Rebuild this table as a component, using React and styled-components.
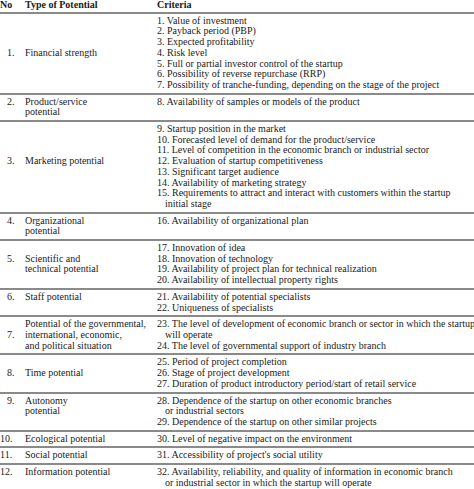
import React from 'react';
import styled, { createGlobalStyle } from 'styled-components';

const LINE = 10.7;

const GlobalStyle = createGlobalStyle`
  html, body {
    margin: 0;
    padding: 0;
    background: #ffffff;
  }
  body {
    font-family: "Liberation Serif", "Times New Roman", serif;
    color: #1a1a1a;
    overflow: hidden;
  }
`;

const Page = styled.div`
  width: 474px;
  height: 489px;
  overflow: hidden;
`;

const Table = styled.table`
  width: 480px;
  border-collapse: collapse;
  table-layout: fixed;
  font-size: 10px;
  line-height: ${LINE}px;
`;

const Row = styled.tr`
  border-bottom: 2px solid #8a8a8a;
`;

const HeadCell = styled.th`
  text-align: left;
  font-weight: bold;
  padding: 0 0 1px 0;
  vertical-align: top;
  white-space: nowrap;
`;

const NoCell = styled.td`
  vertical-align: top;
  padding: ${(p) => p.$skip * LINE + 2}px 0 2px ${(p) => (p.$wide ? 0 : 7)}px;
  white-space: nowrap;
`;

const TypeCell = styled.td`
  vertical-align: top;
  padding: ${(p) => p.$skip * LINE + 2}px 0 2px 0;
  white-space: nowrap;
`;

const CriteriaCell = styled.td`
  vertical-align: top;
  padding: 2px 0 2px 0;
  white-space: nowrap;
`;

const Line = styled.div`
  padding-left: ${(p) => (p.$cont ? 8 : 0)}px;
`;

const rows = [
  {
    no: '1.',
    type: ['Financial strength'],
    skip: 3,
    criteria: [
      '1. Value of investment',
      '2. Payback period (PBP)',
      '3. Expected profitability',
      '4. Risk level',
      '5. Full or partial investor control of the startup',
      '6. Possibility of reverse repurchase (RRP)',
      '7. Possibility of tranche-funding, depending on the stage of the project',
    ],
  },
  {
    no: '2.',
    type: ['Product/service', 'potential'],
    skip: 0,
    criteria: ['8. Availability of samples or models of the product'],
  },
  {
    no: '3.',
    type: ['Marketing potential'],
    skip: 3,
    criteria: [
      '9. Startup position in the market',
      '10. Forecasted level of demand for the product/service',
      '11. Level of competition in the economic branch or industrial sector',
      '12. Evaluation of startup competitiveness',
      '13. Significant target audience',
      '14. Availability of marketing strategy',
      '15. Requirements to attract and interact with customers within the startup',
      ['initial stage'],
    ],
  },
  {
    no: '4.',
    type: ['Organizational', 'potential'],
    skip: 0,
    criteria: ['16. Availability of organizational plan'],
  },
  {
    no: '5.',
    type: ['Scientific and', 'technical potential'],
    skip: 1,
    criteria: [
      '17. Innovation of idea',
      '18. Innovation of technology',
      '19. Availability of project plan for technical realization',
      '20. Availability of intellectual property rights',
    ],
  },
  {
    no: '6.',
    type: ['Staff potential'],
    skip: 0,
    criteria: ['21. Availability of potential specialists', '22. Uniqueness of specialists'],
  },
  {
    no: '7.',
    type: ['Potential of the governmental,', 'international, economic,', 'and political situation'],
    skip: 0,
    noSkip: 1,
    criteria: [
      '23. The level of development of economic branch or sector in which the startup',
      ['will operate'],
      '24. The level of governmental support of industry branch',
    ],
  },
  {
    no: '8.',
    type: ['Time potential'],
    skip: 1,
    criteria: [
      '25. Period of project completion',
      '26. Stage of project development',
      '27. Duration of product introductory period/start of retail service',
    ],
  },
  {
    no: '9.',
    type: ['Autonomy', 'potential'],
    skip: 0,
    criteria: [
      '28. Dependence of the startup on other economic branches',
      ['or industrial sectors'],
      '29. Dependence of the startup on other similar projects',
    ],
  },
  {
    no: '10.',
    type: ['Ecological potential'],
    skip: 0,
    criteria: ['30. Level of negative impact on the environment'],
  },
  {
    no: '11.',
    type: ['Social potential'],
    skip: 0,
    criteria: ["31. Accessibility of project's social utility"],
  },
  {
    no: '12.',
    type: ['Information potential'],
    skip: 0,
    criteria: [
      '32. Availability, reliability, and quality of information in economic branch',
      ['or industrial sector in which the startup will operate'],
    ],
  },
];

const App = () => {
  return (
    <Page>
      <GlobalStyle />
      <Table>
        <colgroup>
          <col style={{ width: '25px' }} />
          <col style={{ width: '132px' }} />
          <col />
        </colgroup>
        <thead>
          <Row>
            <HeadCell>No</HeadCell>
            <HeadCell>Type of Potential</HeadCell>
            <HeadCell>Criteria</HeadCell>
          </Row>
        </thead>
        <tbody>
          {rows.map((row) => (
            <Row key={row.no}>
              <NoCell $skip={row.noSkip ?? row.skip} $wide={row.no.length > 2}>
                {row.no}
              </NoCell>
              <TypeCell $skip={row.skip}>
                {row.type.map((t) => (
                  <Line key={t}>{t}</Line>
                ))}
              </TypeCell>
              <CriteriaCell>
                {row.criteria.map((c) =>
                  Array.isArray(c) ? (
                    <Line key={c[0]} $cont>
                      {c[0]}
                    </Line>
                  ) : (
                    <Line key={c}>{c}</Line>
                  )
                )}
              </CriteriaCell>
            </Row>
          ))}
        </tbody>
      </Table>
    </Page>
  );
};

export default App;
